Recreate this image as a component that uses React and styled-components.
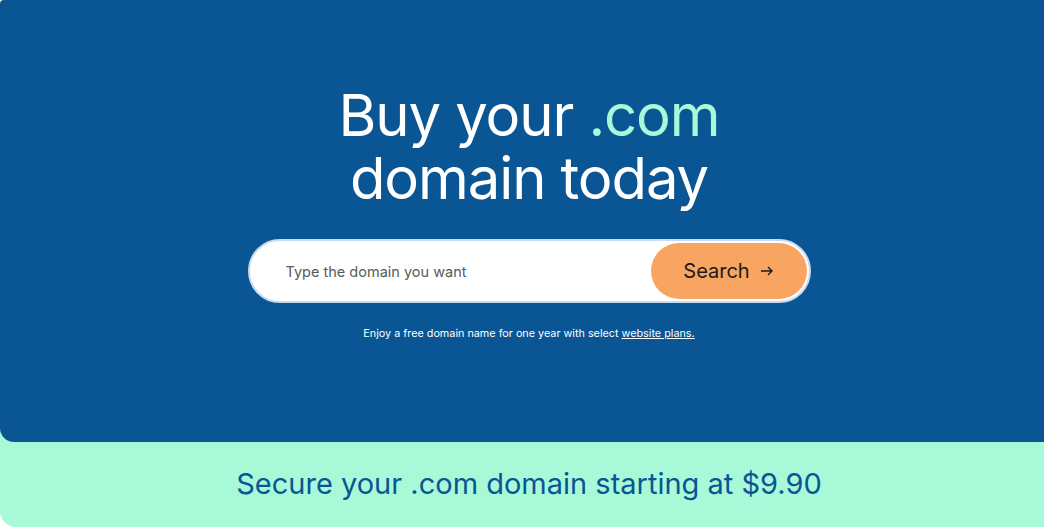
import React from 'react';
import styled, { createGlobalStyle } from 'styled-components';

const GlobalStyle = createGlobalStyle`
  html, body {
    margin: 0;
    padding: 0;
    background: #ffffff;
  }
  body {
    font-family: Inter, "Noto Sans", sans-serif;
  }
`;

const SPage = styled.div`
  width: 1044px;
  height: 527px;
  overflow: hidden;
`;

const SCard = styled.div`
  width: 1058px;
  height: 527px;
  background: #a8f9d8;
  border-radius: 4px 16px 16px 16px;
  display: flex;
  flex-direction: column;
`;

const SHero = styled.section`
  height: 442px;
  background: #0a5594;
  border-radius: 4px 0 14px 14px;
  box-sizing: border-box;
  display: flex;
  flex-direction: column;
  align-items: center;
  padding-top: 84px;
`;

const STitle = styled.h1`
  margin: 0;
  font-weight: 400;
  font-size: 58px;
  line-height: 63px;
  letter-spacing: -1.1px;
  color: #ffffff;
  text-align: center;
`;

const SAccent = styled.span`
  color: #a8f9d8;
`;

const SSearchBar = styled.form`
  margin-top: 29px;
  width: 563px;
  height: 64px;
  box-sizing: border-box;
  background: #ffffff;
  border: 2px solid #c9dcef;
  border-radius: 32px;
  display: flex;
  align-items: center;
  padding: 0 2px 0 34px;
`;

const SInput = styled.input`
  flex: 1;
  border: none;
  outline: none;
  background: transparent;
  font-family: Inter, "Noto Sans", sans-serif;
  font-size: 14.5px;
  color: #333;

  &::placeholder {
    color: #5a5a5a;
  }
`;

const SSearchButton = styled.button`
  width: 156px;
  height: 56px;
  border: none;
  border-radius: 28px;
  background: #f8a562;
  color: #1a1a1a;
  font-family: Inter, "Noto Sans", sans-serif;
  font-size: 20px;
  display: flex;
  align-items: center;
  justify-content: center;
  gap: 10px;
  cursor: pointer;
`;

const SNote = styled.p`
  margin: 24px 0 0;
  font-size: 10.8px;
  color: #ffffff;
  text-align: center;
`;

const SNoteLink = styled.a`
  color: #ffffff;
  text-decoration: underline;
`;

const SStrip = styled.div`
  flex: 1;
  display: flex;
  align-items: center;
  justify-content: center;
  padding-bottom: 2px;
`;

const SStripText = styled.p`
  margin: 0;
  font-size: 29px;
  color: #0a5594;
`;

function App() {
  return (
    <>
      <GlobalStyle />
      <SPage>
        <SCard>
          <SHero>
            <STitle>
              Buy your <SAccent>.com</SAccent>
              <br />
              domain today
            </STitle>
            <SSearchBar onSubmit={e => e.preventDefault()}>
              <SInput placeholder="Type the domain you want" />
              <SSearchButton type="submit">
                Search
                <svg width="14" height="14" viewBox="0 0 14 14" fill="none" stroke="#1a1a1a" strokeWidth="1.4">
                  <path d="M1 7h11M8 3l4 4-4 4" />
                </svg>
              </SSearchButton>
            </SSearchBar>
            <SNote>
              Enjoy a free domain name for one year with select{' '}
              <SNoteLink href="#">website plans.</SNoteLink>
            </SNote>
          </SHero>
          <SStrip>
            <SStripText>Secure your .com domain starting at $9.90</SStripText>
          </SStrip>
        </SCard>
      </SPage>
    </>
  );
}

export default App;
